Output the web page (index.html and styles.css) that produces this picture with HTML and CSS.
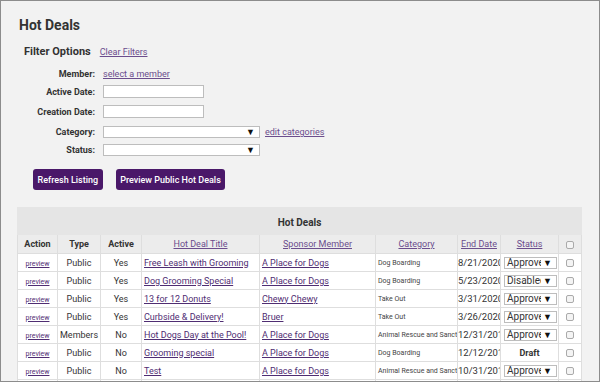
FILE: index.html
```html
<!DOCTYPE html>
<html lang="en">
<head>
  <meta charset="UTF-8">
  <title>Hot Deals</title>
  <link rel="stylesheet" href="styles.css">
</head>
<body>
  <div class="page">
    <h1>Hot Deals</h1>

    <div class="filter-head">
      <h2>Filter Options</h2>
      <a href="#">Clear Filters</a>
    </div>

    <div class="filters">
      <div class="row r-member">
        <label>Member:</label>
        <a href="#">select a member</a>
      </div>
      <div class="row r-active">
        <label for="active">Active Date:</label>
        <input type="text" id="active" class="date">
      </div>
      <div class="row r-created">
        <label for="created">Creation Date:</label>
        <input type="text" id="created" class="date">
      </div>
      <div class="row r-category">
        <label>Category:</label>
        <span class="sel wide"><span class="sel-text"></span><span class="arrow">▼</span></span>
        <a href="#" class="edit">edit categories</a>
      </div>
      <div class="row r-status">
        <label>Status:</label>
        <span class="sel wide"><span class="sel-text"></span><span class="arrow">▼</span></span>
      </div>
    </div>

    <div class="actions">
      <button>Refresh Listing</button>
      <button>Preview Public Hot Deals</button>
    </div>

    <table class="deals">
      <colgroup>
        <col style="width:40px">
        <col style="width:43px">
        <col style="width:41px">
        <col style="width:118px">
        <col style="width:116px">
        <col style="width:82px">
        <col style="width:43px">
        <col style="width:58px">
        <col style="width:23px">
      </colgroup>
      <thead>
        <tr class="band"><th colspan="9">Hot Deals</th></tr>
        <tr class="cols">
          <th>Action</th>
          <th>Type</th>
          <th>Active</th>
          <th><a href="#">Hot Deal Title</a></th>
          <th><a href="#">Sponsor Member</a></th>
          <th><a href="#">Category</a></th>
          <th><a href="#">End Date</a></th>
          <th><a href="#">Status</a></th>
          <th><span class="chk"></span></th>
        </tr>
      </thead>
      <tbody>
        <tr>
          <td class="act"><a href="#">preview</a></td><td class="c">Public</td><td class="c">Yes</td>
          <td><a href="#">Free Leash with Grooming</a></td><td><a href="#">A Place for Dogs</a></td>
          <td class="cat">Dog Boarding</td><td class="date-c">8/21/2020</td>
          <td><span class="sel"><span class="sel-text">Approved</span><span class="arrow">▼</span></span></td>
          <td class="c"><span class="chk"></span></td>
        </tr>
        <tr>
          <td class="act"><a href="#">preview</a></td><td class="c">Public</td><td class="c">Yes</td>
          <td><a href="#">Dog Grooming Special</a></td><td><a href="#">A Place for Dogs</a></td>
          <td class="cat">Dog Boarding</td><td class="date-c">5/23/2020</td>
          <td><span class="sel"><span class="sel-text">Disabled</span><span class="arrow">▼</span></span></td>
          <td class="c"><span class="chk"></span></td>
        </tr>
        <tr>
          <td class="act"><a href="#">preview</a></td><td class="c">Public</td><td class="c">Yes</td>
          <td><a href="#">13 for 12 Donuts</a></td><td><a href="#">Chewy Chewy</a></td>
          <td class="cat">Take Out</td><td class="date-c">3/31/2020</td>
          <td><span class="sel"><span class="sel-text">Approved</span><span class="arrow">▼</span></span></td>
          <td class="c"><span class="chk"></span></td>
        </tr>
        <tr>
          <td class="act"><a href="#">preview</a></td><td class="c">Public</td><td class="c">Yes</td>
          <td><a href="#">Curbside &amp; Delivery!</a></td><td><a href="#">Bruer</a></td>
          <td class="cat">Take Out</td><td class="date-c">3/26/2020</td>
          <td><span class="sel"><span class="sel-text">Approved</span><span class="arrow">▼</span></span></td>
          <td class="c"><span class="chk"></span></td>
        </tr>
        <tr>
          <td class="act"><a href="#">preview</a></td><td class="c">Members</td><td class="c">No</td>
          <td><a href="#">Hot Dogs Day at the Pool!</a></td><td><a href="#">A Place for Dogs</a></td>
          <td class="cat">Animal Rescue and Sanctuary</td><td class="date-c">12/31/2019</td>
          <td><span class="sel"><span class="sel-text">Approved</span><span class="arrow">▼</span></span></td>
          <td class="c"><span class="chk"></span></td>
        </tr>
        <tr>
          <td class="act"><a href="#">preview</a></td><td class="c">Public</td><td class="c">No</td>
          <td><a href="#">Grooming special</a></td><td><a href="#">A Place for Dogs</a></td>
          <td class="cat">Dog Boarding</td><td class="date-c">12/12/2019</td>
          <td class="c draft">Draft</td>
          <td class="c"><span class="chk"></span></td>
        </tr>
        <tr>
          <td class="act"><a href="#">preview</a></td><td class="c">Public</td><td class="c">No</td>
          <td><a href="#">Test</a></td><td><a href="#">A Place for Dogs</a></td>
          <td class="cat">Animal Rescue and Sanctuary</td><td class="date-c">10/31/2019</td>
          <td><span class="sel"><span class="sel-text">Approved</span><span class="arrow">▼</span></span></td>
          <td class="c"><span class="chk"></span></td>
        </tr>
        <tr>
          <td class="act"><a href="#">preview</a></td><td class="c">Public</td><td class="c">No</td>
          <td><a href="#">Spring Special</a></td><td><a href="#">Chewy Chewy</a></td>
          <td class="cat">Take Out</td><td class="date-c">9/30/2019</td>
          <td><span class="sel"><span class="sel-text">Approved</span><span class="arrow">▼</span></span></td>
          <td class="c"><span class="chk"></span></td>
        </tr>
      </tbody>
    </table>
  </div>
</body>
</html>
```

FILE: styles.css
```css
* {
  box-sizing: border-box;
}

body {
  margin: 0;
  padding: 0;
  font-family: Roboto, 'Liberation Sans', sans-serif;
  color: #333;
}

.page {
  width: 600px;
  height: 382px;
  border: 1px solid #8c8c8c;
  background: #f2f2f2;
  overflow: hidden;
}

a {
  color: #6b4d8d;
}

h1 {
  margin: 15px 0 0 18px;
  font-size: 14px;
  line-height: 18px;
  font-weight: 700;
  color: #333;
}

.filter-head {
  display: flex;
  align-items: baseline;
  gap: 9px;
  margin: 11px 0 0 23px;
  line-height: 14px;
}

.filter-head h2 {
  margin: 0;
  font-size: 11px;
  font-weight: 700;
}

.filter-head a,
.filters a {
  font-size: 9px;
}

.filters {
  margin-top: 8px;
}

.row {
  display: flex;
  align-items: center;
  gap: 8px;
}

.row label {
  width: 94px;
  text-align: right;
  font-size: 9px;
  font-weight: 700;
  color: #333;
}

.r-member {
  height: 14px;
}

.r-active {
  margin-top: 4px;
}

.r-created {
  margin-top: 7px;
}

.r-category {
  margin-top: 8px;
}

.r-status {
  margin-top: 6px;
}

input.date {
  width: 101px;
  height: 13px;
  margin: 0;
  padding: 0;
  border: 1px solid #bdbdbd;
  background: #fff;
}

.sel {
  display: flex;
  align-items: center;
  width: 53px;
  height: 12px;
  border: 1px solid #bdbdbd;
  background: #fff;
  font-size: 10px;
  color: #333;
}

.sel.wide {
  width: 157px;
}

.sel-text {
  flex: 1;
  overflow: hidden;
  white-space: nowrap;
  padding-left: 2px;
  line-height: 10px;
}

.arrow {
  font-size: 9px;
  line-height: 10px;
  padding: 0 4px 0 2px;
  color: #111;
}

.edit {
  margin-left: -3px;
}

.actions {
  display: flex;
  gap: 13px;
  margin: 13px 0 0 32px;
}

.actions button {
  height: 21px;
  padding: 0 4.5px;
  border: none;
  border-radius: 3px;
  background: #4a1869;
  color: #fff;
  font-family: Roboto, 'Liberation Sans', sans-serif;
  font-size: 9px;
  font-weight: 500;
}

.deals {
  margin: 17px 0 0 16px;
  width: 564px;
  table-layout: fixed;
  border-collapse: collapse;
  background: #fff;
}

.deals th,
.deals td {
  padding: 0 2px;
  border: 1px solid #dedede;
  white-space: nowrap;
  overflow: hidden;
  font-size: 9px;
}

.deals .band th {
  height: 27px;
  background: #e5e5e5;
  border-color: #e5e5e5;
  font-size: 10px;
  font-weight: 700;
  padding-top: 2px;
}

.deals .cols th {
  height: 19px;
  background: #ececec;
  font-weight: 700;
}

.deals .cols th a {
  font-weight: 400;
}

.deals td {
  height: 18px;
}

.deals td a {
  color: #4f2d72;
}

.c {
  text-align: center;
}

.act {
  text-align: center;
}

.act a {
  font-size: 7px;
  color: #6b4d8d;
}

.deals td.cat {
  font-size: 7px;
  color: #444;
}

.deals td.date-c {
  font-size: 9.5px;
  padding-left: 0;
}

.deals td .sel {
  margin-left: 1px;
}

.deals td.draft {
  font-weight: 700;
}

.chk {
  display: inline-block;
  width: 8px;
  height: 8px;
  border: 1px solid #aaa;
  border-radius: 2px;
  background: #f4f4f4;
  vertical-align: middle;
}
```
